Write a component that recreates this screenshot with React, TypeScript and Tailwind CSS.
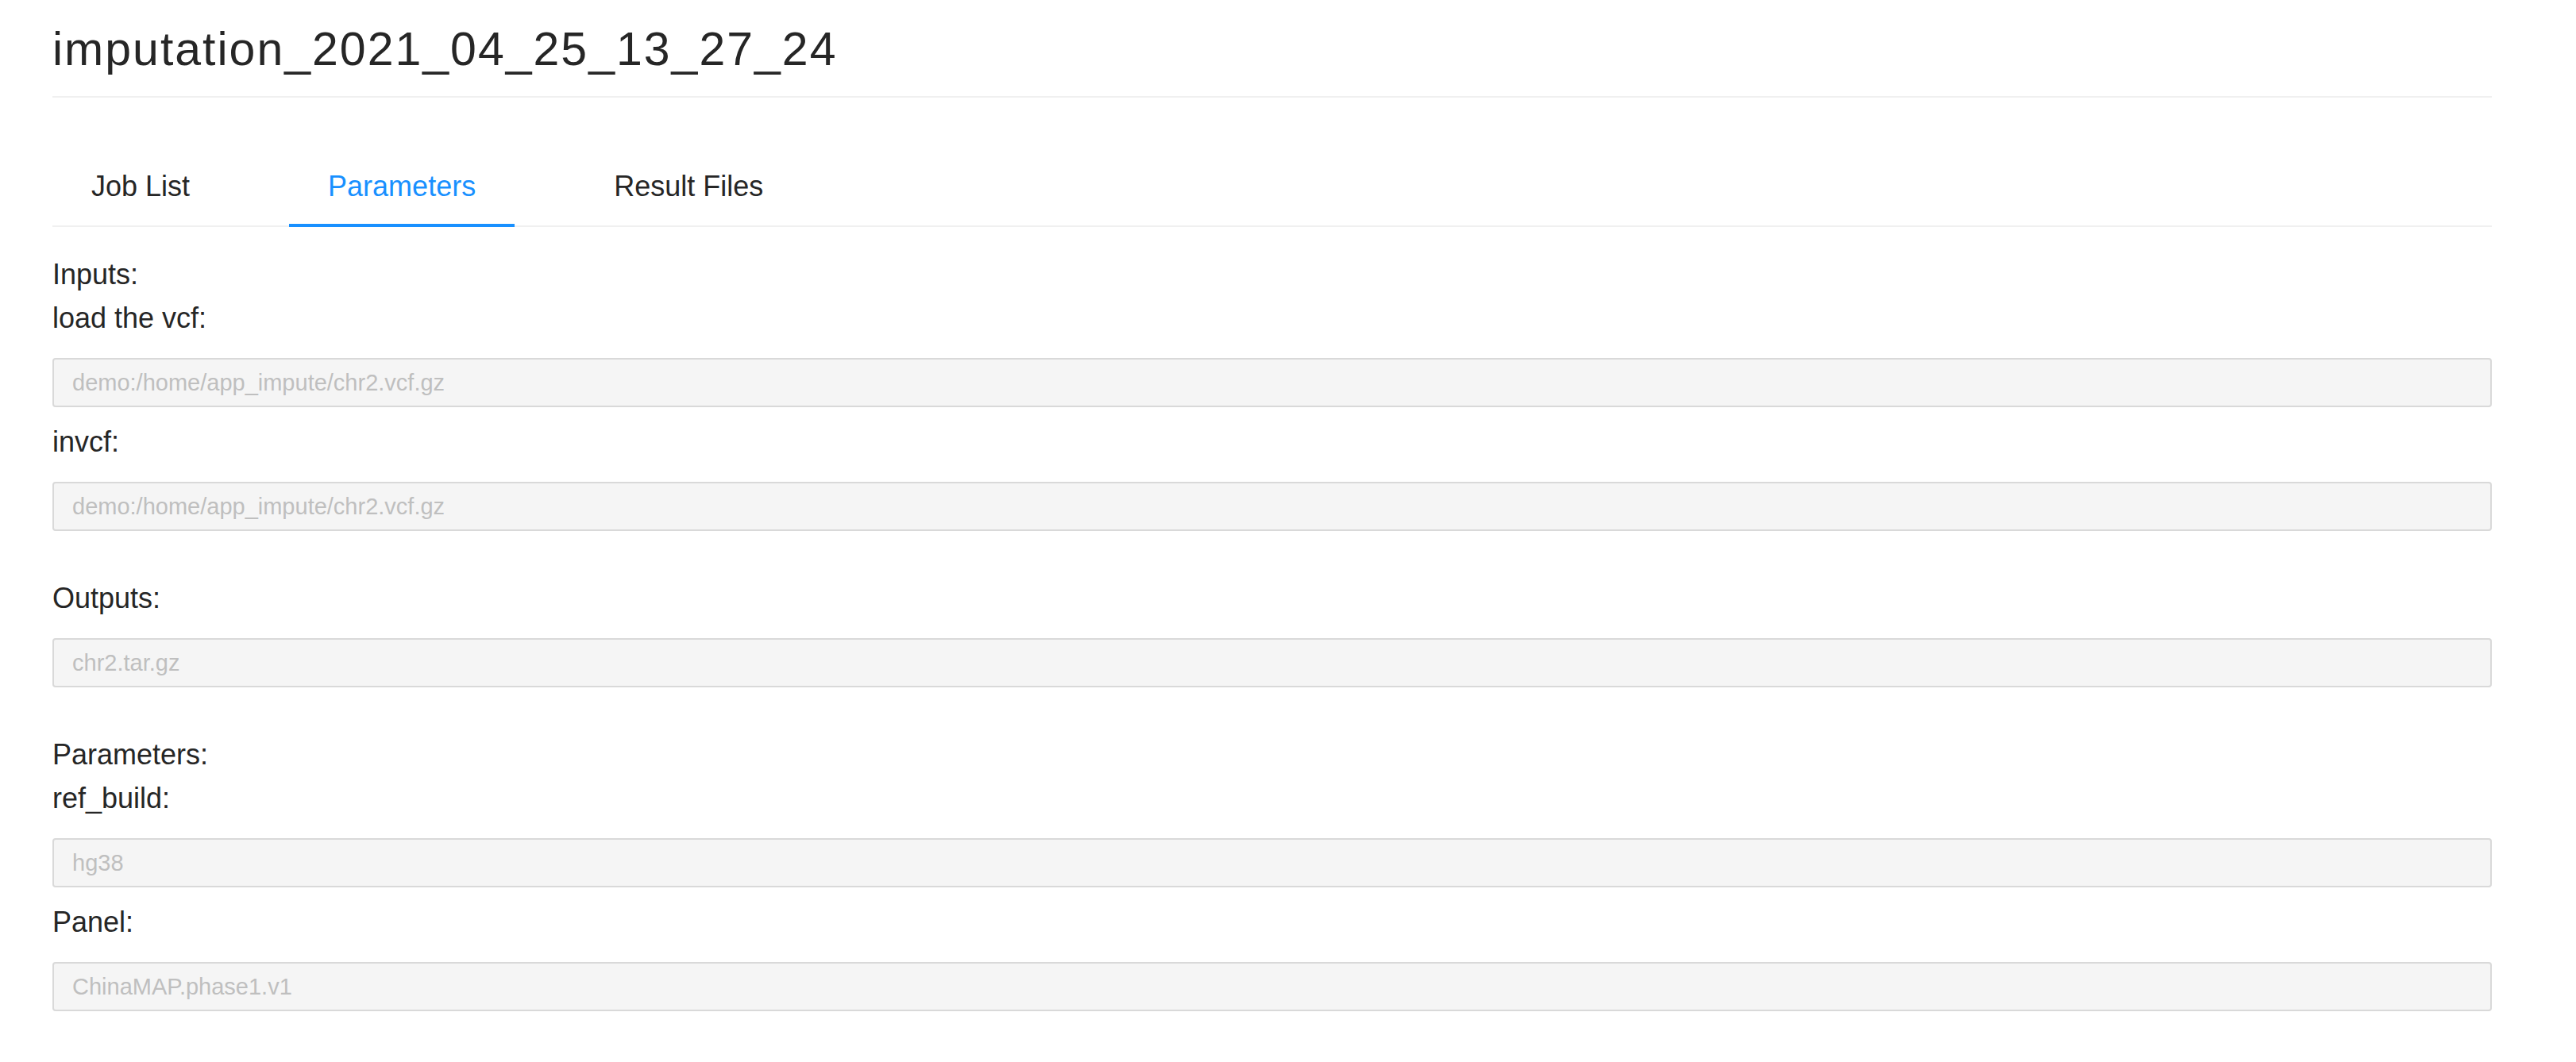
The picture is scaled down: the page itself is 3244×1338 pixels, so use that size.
import { useState } from "react";

interface Field {
  label: string;
  value: string;
}

interface Section {
  title: string;
  fields: Field[];
}

const sections: Section[] = [
  {
    title: "Inputs:",
    fields: [
      { label: "load the vcf:", value: "demo:/home/app_impute/chr2.vcf.gz" },
      { label: "invcf:", value: "demo:/home/app_impute/chr2.vcf.gz" },
    ],
  },
  {
    title: "Outputs:",
    fields: [{ label: "", value: "chr2.tar.gz" }],
  },
  {
    title: "Parameters:",
    fields: [
      { label: "ref_build:", value: "hg38" },
      { label: "Panel:", value: "ChinaMAP.phase1.v1" },
    ],
  },
];

const tabs = ["Job List", "Parameters", "Result Files"];

function ReadonlyInput({ value }: { value: string }) {
  return (
    <input
      disabled
      value={value}
      readOnly
      className="mt-[23px] mb-[16px] block h-[62px] w-full rounded-[4px] border-2 border-[#d9d9d9] bg-[#f5f5f5] px-[23px] text-[29px] text-[#bfbfbf] outline-none"
    />
  );
}

export default function App() {
  const [tab, setTab] = useState("Parameters");

  return (
    <div className="min-h-screen w-full bg-white pl-[66px] pr-[106px] font-['Liberation_Sans',Arial,sans-serif] text-[#262626]">
      {/* Header */}
      <h1 className="mt-[24px] text-[59px] leading-[77px] tracking-[2px] font-normal">
        imputation_2021_04_25_13_27_24
      </h1>
      <div className="mt-[20px] border-b-2 border-[#f0f0f0]" />

      {/* Tabs */}
      <div className="mt-[84px] flex gap-[76px] border-b-2 border-[#f0f0f0]">
        {tabs.map((t) => (
          <button
            key={t}
            type="button"
            onClick={() => setTab(t)}
            className={`-mb-[2px] border-b-4 px-[49px] pb-[20px] text-[36px] leading-[55px] ${
              tab === t ? "border-[#1890ff] text-[#1890ff]" : "border-transparent text-[#262626]"
            }`}
          >
            {t}
          </button>
        ))}
      </div>

      {/* Parameters content */}
      <div className="pt-[32px]">
        {sections.map((section) => (
          <div key={section.title} className="mb-[57px] text-[36px] leading-[55px]">
            <div>{section.title}</div>
            {section.fields.map((field, i) => (
              <div key={`${section.title}-${i}`}>
                {field.label && <div>{field.label}</div>}
                <ReadonlyInput value={field.value} />
              </div>
            ))}
          </div>
        ))}
      </div>
    </div>
  );
}
